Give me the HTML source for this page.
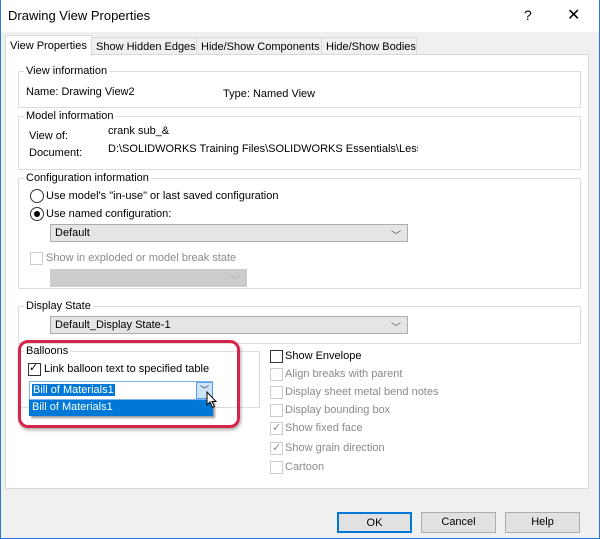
<!DOCTYPE html>
<html><head><style>
*{box-sizing:border-box;margin:0;padding:0}
body{width:600px;height:539px;background:#fff;font-family:"Liberation Sans",sans-serif;font-size:11px;color:#000;position:relative;overflow:hidden}
.a{position:absolute;white-space:nowrap}
.win{position:absolute;left:0;top:0;width:600px;height:539px;border:1px solid #2b79d6;border-top:none;background:#f0f0f0}
.grp{position:absolute;border:1px solid #dcdcdc}
.lg{position:absolute;background:#fff;padding:0 2px;top:-7px;left:5px;font-size:11px}
.dd{position:absolute;background:#e5e5e5;border:1px solid #adadad;height:18px;padding:2px 4px}
.dd .ch{position:absolute;right:6px;top:2px;color:#555;font-size:10px}
.cb{position:absolute;width:13px;height:13px;border:1px solid #333;background:#fff}
.cb.d{border-color:#ccc}
.gt{color:#8a8a8a}
.btn{position:absolute;top:512px;height:21px;width:75px;background:#e1e1e1;border:1px solid #adadad;text-align:center;line-height:19px}
.tab{position:absolute;top:37px;height:18px;background:#f0f0f0;border:1px solid #d9d9d9;padding:3px 0 0 4px;white-space:nowrap;overflow:hidden}
</style></head><body>
<div class="win"></div>
<div class="a" style="left:1px;top:0;width:598px;height:32px;background:#fff"></div>
<div class="a" style="left:8px;top:8px;font-size:13px">Drawing View Properties</div>
<div class="a" style="left:524px;top:7px;font-size:14px">?</div>
<div class="a" style="left:567px;top:5px;font-size:16px">✕</div>
<div class="tab" style="left:91px;width:106px">Show Hidden Edges</div>
<div class="tab" style="left:196px;width:126px">Hide/Show Components</div>
<div class="tab" style="left:321px;width:96px">Hide/Show Bodies</div>
<div class="a" style="left:5px;top:54px;width:584px;height:435px;background:#fff;border:1px solid #d9d9d9"></div>
<div class="a" style="left:5px;top:35px;width:87px;height:21px;background:#fff;border:1px solid #d9d9d9;border-bottom:none"></div>
<div class="a" style="left:10px;top:40px">View Properties</div>

<div class="grp" style="left:18px;top:71px;width:563px;height:37px"><span class="lg">View information</span></div>
<div class="a" style="left:26px;top:86px">Name: Drawing View2</div>
<div class="a" style="left:223px;top:88px">Type: Named View</div>

<div class="grp" style="left:18px;top:116px;width:563px;height:54px"><span class="lg">Model information</span></div>
<div class="a" style="left:29px;top:130px">View of:</div>
<div class="a" style="left:108px;top:125px">crank sub_&amp;</div>
<div class="a" style="left:29px;top:147px">Document:</div>
<div class="a" style="left:108px;top:143px;width:310px;overflow:hidden">D:\SOLIDWORKS Training Files\SOLIDWORKS Essentials\Lesson</div>

<div class="grp" style="left:18px;top:178px;width:563px;height:111px"><span class="lg">Configuration information</span></div>
<div class="a" style="left:30px;top:189px;width:14px;height:14px;border:1px solid #333;border-radius:50%;background:#fff"></div>
<div class="a" style="left:46px;top:190px">Use model's "in-use" or last saved configuration</div>
<div class="a" style="left:30px;top:207px;width:14px;height:14px;border:1px solid #333;border-radius:50%;background:#fff"></div>
<div class="a" style="left:34px;top:211px;width:6px;height:6px;border-radius:50%;background:#000"></div>
<div class="a" style="left:46px;top:208px">Use named configuration:</div>
<div class="dd" style="left:50px;top:224px;width:358px">Default<span class="ch">﹀</span></div>
<div class="cb d" style="left:30px;top:252px"></div>
<div class="a gt" style="left:46px;top:252px">Show in exploded or model break state</div>
<div class="dd" style="left:50px;top:269px;width:197px;background:#ccc;border-color:#ccc"><span class="ch" style="color:#aaa">﹀</span></div>

<div class="grp" style="left:18px;top:306px;width:563px;height:38px"><span class="lg">Display State</span></div>
<div class="dd" style="left:50px;top:316px;width:358px">Default_Display State-1<span class="ch">﹀</span></div>

<div class="grp" style="left:18px;top:351px;width:242px;height:57px"><span class="lg">Balloons</span></div>
<div class="cb" style="left:28px;top:363px"></div>
<div class="a" style="left:29px;top:361px;font-size:11px">✓</div>
<div class="a" style="left:44px;top:363px">Link balloon text to specified table</div>
<div class="a" style="left:29px;top:381px;width:184px;height:19px;background:#fff;border:1px solid #7eb4ea"></div>
<div class="a" style="left:32px;top:384px;background:#0078d7;color:#fff;padding:0 1px">Bill of Materials1</div>
<div class="a" style="left:196px;top:382px;width:17px;height:17px;background:#cce4f7;border:1px solid #569de5;text-align:center;font-size:9px;color:#333;line-height:15px">﹀</div>
<div class="a" style="left:29px;top:400px;width:184px;height:16px;background:#0078d7;color:#fff;padding:1px 3px;box-shadow:2px 2px 2px #999">Bill of Materials1</div>
<svg class="a" style="left:206px;top:391px" width="12" height="18" viewBox="0 0 12 18"><path d="M1 1 L1 14 L4 11 L6.5 16.5 L8.5 15.5 L6 10.5 L10 10.5 Z" fill="#fff" stroke="#000" stroke-width="1"/></svg>
<div class="a" style="left:18px;top:340px;width:222px;height:88px;border:3px solid #d6234a;border-radius:10px;box-shadow:1px 2px 3px #aaa"></div>

<div class="cb" style="left:270px;top:350px"></div>
<div class="a" style="left:285px;top:350px">Show Envelope</div>
<div class="cb d" style="left:270px;top:368px"></div><div class="a gt" style="left:285px;top:368px">Align breaks with parent</div>
<div class="cb d" style="left:270px;top:386px"></div><div class="a gt" style="left:285px;top:386px">Display sheet metal bend notes</div>
<div class="cb d" style="left:270px;top:404px"></div><div class="a gt" style="left:285px;top:404px">Display bounding box</div>
<div class="cb d" style="left:270px;top:422px"></div><div class="a gt" style="left:272px;top:421px">✓</div><div class="a gt" style="left:285px;top:422px">Show fixed face</div>
<div class="cb d" style="left:270px;top:442px"></div><div class="a gt" style="left:272px;top:441px">✓</div><div class="a gt" style="left:285px;top:442px">Show grain direction</div>
<div class="cb d" style="left:270px;top:461px"></div><div class="a gt" style="left:285px;top:461px">Cartoon</div>

<div class="btn" style="left:337px;border:2px solid #0078d7">OK</div>
<div class="btn" style="left:421px">Cancel</div>
<div class="btn" style="left:505px">Help</div>
</body></html>
